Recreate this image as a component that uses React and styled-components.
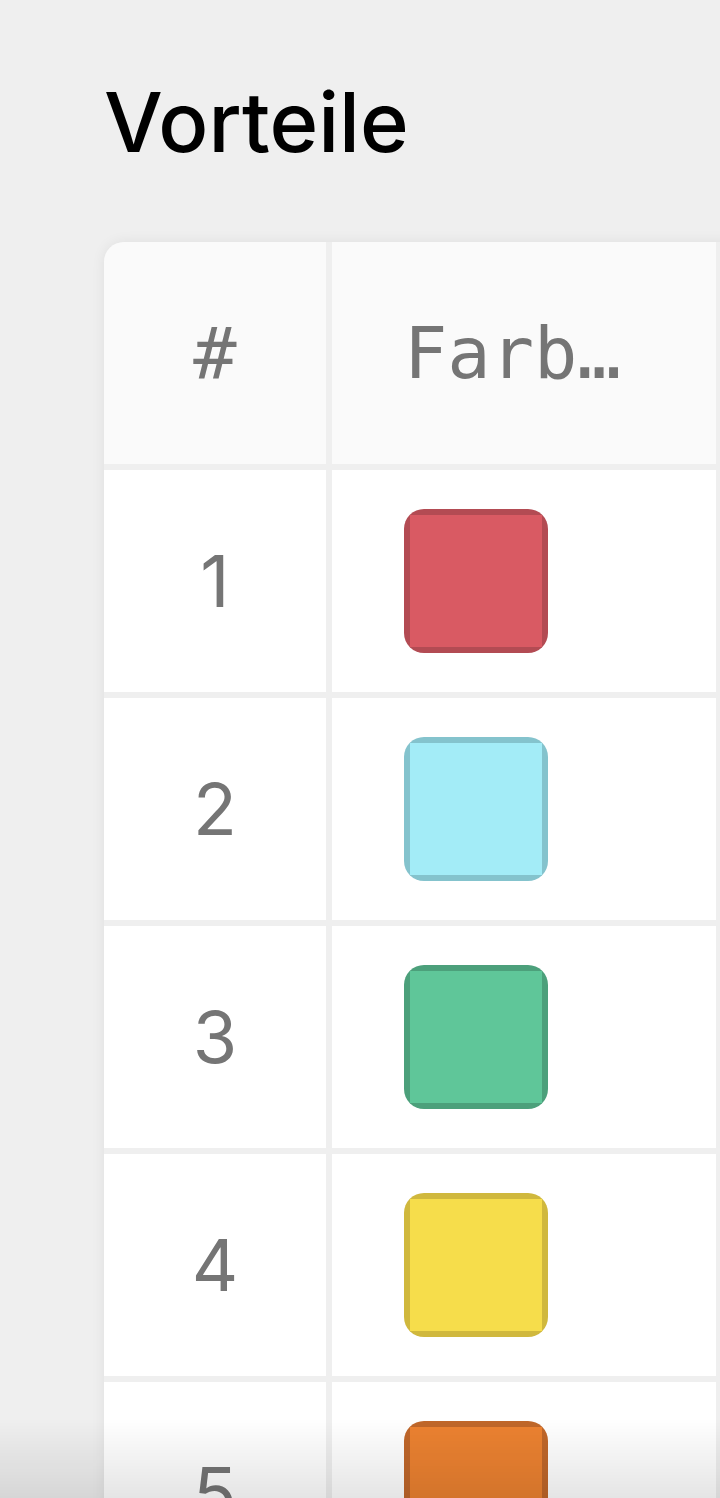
import React from "react";
import styled, { createGlobalStyle } from "styled-components";

const rows = [
  { id: 1, fill: "#d95a63", edge: "#b34b53" },
  { id: 2, fill: "#a3ecf7", edge: "#84c3cd" },
  { id: 3, fill: "#5fc699", edge: "#4ca07b" },
  { id: 4, fill: "#f6dd4b", edge: "#d0b83d" },
  { id: 5, fill: "#ec8231", edge: "#c0672a" },
];

const GlobalStyle = createGlobalStyle`
  html, body {
    margin: 0;
    padding: 0;
    background: #efefef;
    overflow: hidden;
  }
`;

const Page = styled.main`
  padding: 73px 0 0 104px;
  font-family: Inter, "Noto Sans", sans-serif;
`;

const Title = styled.h1`
  margin: 0;
  font-size: 83px;
  line-height: 1.2;
  font-weight: 500;
  color: #000;
`;

const Table = styled.div`
  margin-top: 69px;
  display: grid;
  grid-template-columns: 222px 384px 384px;
  gap: 6px;
  width: max-content;
  border-radius: 20px 0 0 0;
  box-shadow: 0 0 14px rgba(0, 0, 0, 0.07);
`;

const Cell = styled.div`
  height: 222px;
  box-sizing: border-box;
  padding: 0 72px;
  display: flex;
  align-items: center;
  justify-content: ${(p) => (p.$center ? "center" : "flex-start")};
  background: ${(p) => (p.$head ? "#fafafa" : "#fff")};
  border-top-left-radius: ${(p) => (p.$corner ? "20px" : "0")};
  color: #757575;
  font-size: 72px;
  font-family: ${(p) =>
    p.$head ? '"DejaVu Sans Mono", monospace' : 'Inter, "Noto Sans", sans-serif'};
  min-width: 0;
  overflow: hidden;
`;

const HeadText = styled.span`
  display: block;
  white-space: nowrap;
  overflow: hidden;
  text-overflow: ellipsis;
  min-width: 0;
`;

const Swatch = styled.div`
  width: 144px;
  height: 144px;
  border-radius: 20px;
  background: linear-gradient(${(p) => p.$fill}, ${(p) => p.$fill}) center /
      calc(100% - 12px) calc(100% - 12px) no-repeat,
    ${(p) => p.$edge};
`;

const Fade = styled.div`
  position: fixed;
  left: 0;
  right: 0;
  bottom: 0;
  height: 80px;
  pointer-events: none;
  background: linear-gradient(rgba(0, 0, 0, 0), rgba(0, 0, 0, 0.1));
`;

export default function App() {
  return (
    <>
      <GlobalStyle />
      <Page>
        <Title>Vorteile</Title>
        <Table>
          <Cell $head $center $corner>
            <HeadText>#</HeadText>
          </Cell>
          <Cell $head>
            <HeadText>Farbkennung</HeadText>
          </Cell>
          <Cell $head />
          {rows.map((r) => (
            <React.Fragment key={r.id}>
              <Cell $center>{r.id}</Cell>
              <Cell>
                <Swatch $fill={r.fill} $edge={r.edge} />
              </Cell>
              <Cell />
            </React.Fragment>
          ))}
        </Table>
      </Page>
      <Fade />
    </>
  );
}
